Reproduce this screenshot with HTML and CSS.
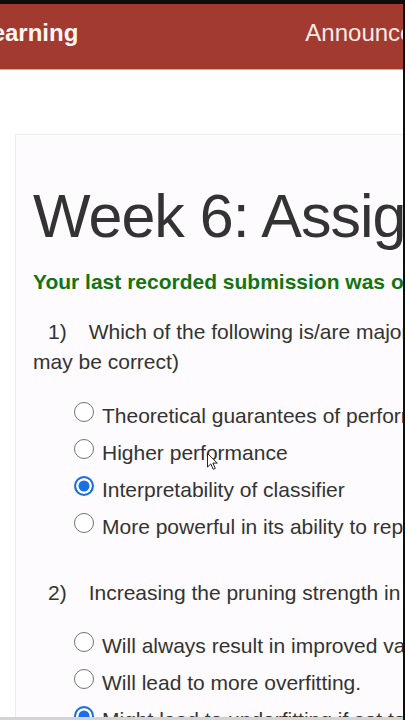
FILE: index.html
```html
<!DOCTYPE html>
<html lang="en">
<head>
<meta charset="utf-8">
<title>Week 6: Assignment 6</title>
<link rel="stylesheet" href="styles.css">
</head>
<body>
<div class="screen">
  <div class="viewport">
    <div class="topbar"></div>
    <header class="header">
      <span class="brand">Learning</span>
      <span class="nav">Announcements</span>
    </header>
    <div class="content">
      <section class="card">
        <h1 class="title">Week 6: Assignment 6</h1>
        <p class="status">Your last recorded submission was on 2023-09-05, 23:59 IST</p>
        <p class="question"><span class="nowrap"><span class="qnum">1)</span>Which of the following is/are major advantages of decision trees over other supervised learning techniques (Note - more than one answer</span><br>may be correct)</p>
        <ul class="options">
          <li class="option"><span class="radio"></span>Theoretical guarantees of performance</li>
          <li class="option"><span class="radio"></span>Higher performance</li>
          <li class="option"><span class="radio checked"></span>Interpretability of classifier</li>
          <li class="option"><span class="radio"></span>More powerful in its ability to represent complex functions</li>
        </ul>
        <p class="question q2"><span class="nowrap"><span class="qnum">2)</span>Increasing the pruning strength in a decision tree by reducing the maximum depth:</span></p>
        <ul class="options">
          <li class="option"><span class="radio"></span>Will always result in improved validation accuracy.</li>
          <li class="option"><span class="radio"></span>Will lead to more overfitting.</li>
          <li class="option"><span class="radio checked"></span>Might lead to underfitting if set too aggressively.</li>
          <li class="option"><span class="radio"></span>Will have no impact on training accuracy.</li>
        </ul>
      </section>
    </div>
    <div class="bottombar"></div>
  </div>
  <div class="edge"></div>
  <svg class="cursor" width="12" height="18" viewBox="0 0 12 18">
    <path d="M0.5 0.5 L0.5 14 L3.8 10.9 L6.2 16.3 L8.3 15.4 L5.9 10.1 L10.3 10.1 Z" fill="#fff" stroke="#222" stroke-width="1" stroke-linejoin="round"/>
  </svg>
</div>
</body>
</html>
```

FILE: styles.css
```css
html, body {
  margin: 0;
  padding: 0;
  background: #ffffff;
}

body {
  font-family: "Liberation Sans", Arial, Helvetica, sans-serif;
  color: #333333;
}

.screen {
  position: relative;
  display: flex;
  width: 405px;
  height: 720px;
  overflow: hidden;
}

.viewport {
  flex: 1;
  min-width: 0;
  display: flex;
  flex-direction: column;
  overflow: hidden;
}

.topbar {
  flex: none;
  height: 4px;
  background: #0d0d0d;
}

.header {
  flex: none;
  box-sizing: border-box;
  height: 66px;
  padding-top: 15px;
  background: #a33a30;
  border-bottom: 1px solid #dba39b;
  display: flex;
  align-items: flex-start;
  white-space: nowrap;
  overflow: hidden;
}

.brand {
  flex: none;
  margin-left: -23px;
  font-size: 24px;
  line-height: 28px;
  font-weight: bold;
  color: #fff7f4;
}

.nav {
  flex: none;
  margin-left: 227px;
  font-size: 24px;
  line-height: 28px;
  color: #f6ebe7;
}

.content {
  flex: 1;
  min-height: 0;
  overflow: hidden;
  padding: 64px 0 0 15px;
}

.card {
  width: 1100px;
  border: 1px solid #ececec;
  border-right: none;
  background: #fdfbfd;
  padding: 48px 0 40px 17px;
}

.title {
  margin: 0;
  font-size: 61px;
  line-height: 66px;
  font-weight: normal;
  letter-spacing: -1px;
  color: #333333;
  white-space: nowrap;
}

.status {
  margin: 18px 0 0;
  font-size: 21px;
  line-height: 30px;
  font-weight: bold;
  color: #127512;
  white-space: nowrap;
}

.question {
  margin: 20px 0 0;
  font-size: 21px;
  line-height: 30px;
  color: #333333;
}

.question.q2 {
  margin-top: 33px;
}

.nowrap {
  white-space: nowrap;
}

.qnum {
  padding-left: 15px;
  margin-right: 22px;
}

.options {
  list-style: none;
  margin: 20px 0 0;
  padding: 0 0 0 41px;
}

.q2 + .options {
  margin-top: 19px;
}

.option {
  display: flex;
  align-items: flex-start;
  height: 37px;
  font-size: 21px;
  line-height: 37px;
  color: #333333;
  white-space: nowrap;
}

.radio {
  flex: none;
  box-sizing: border-box;
  width: 20px;
  height: 20px;
  margin-top: 4.5px;
  margin-right: 8px;
  border-radius: 50%;
  border: 1.5px solid #737373;
  background: #ffffff;
}

.radio.checked {
  border: 2px solid #1b6fe4;
  background: #1b6fe4;
  box-shadow: inset 0 0 0 2.5px #ffffff;
}

.bottombar {
  flex: none;
  height: 3px;
  background: #d3d3d3;
}

.edge {
  flex: none;
  width: 2px;
  background: #0d0d0d;
}

.cursor {
  position: absolute;
  left: 207px;
  top: 453px;
}
```
